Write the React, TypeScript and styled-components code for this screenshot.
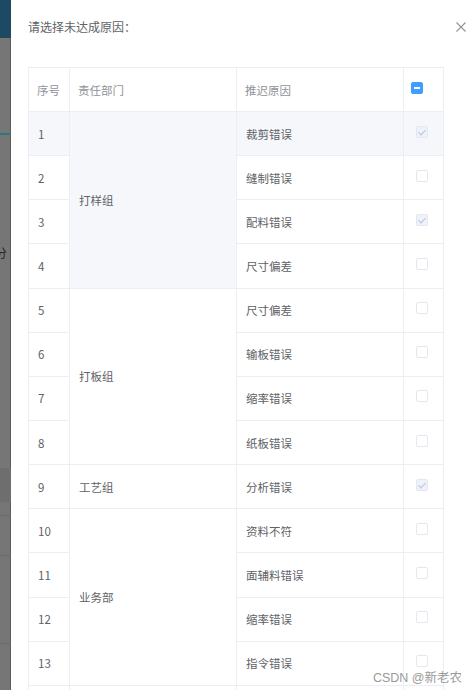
import React from "react";
import styled, { createGlobalStyle } from "styled-components";

type Reason = {
  no?: number;
  dept?: string;
  span?: number;
  reason: string;
  checked: boolean;
};

const reasons: Reason[] = [
  { no: 1, dept: "打样组", span: 4, reason: "裁剪错误", checked: true },
  { no: 2, reason: "缝制错误", checked: false },
  { no: 3, reason: "配料错误", checked: true },
  { no: 4, reason: "尺寸偏差", checked: false },
  { no: 5, dept: "打板组", span: 4, reason: "尺寸偏差", checked: false },
  { no: 6, reason: "输板错误", checked: false },
  { no: 7, reason: "缩率错误", checked: false },
  { no: 8, reason: "纸板错误", checked: false },
  { no: 9, dept: "工艺组", span: 1, reason: "分析错误", checked: true },
  { no: 10, dept: "业务部", span: 4, reason: "资料不符", checked: false },
  { no: 11, reason: "面辅料错误", checked: false },
  { no: 12, reason: "缩率错误", checked: false },
  { no: 13, reason: "指令错误", checked: false },
  // next row, only its top border shows at the bottom of the window
  { dept: "", span: 1, reason: "", checked: false },
];

// the first group is hovered in the screenshot
const hoverRow = 1;
const hoverGroup = "打样组";

function App() {
  return (
    <>
      <GlobalStyle />
      <Page>
        <Backdrop>
          <BackNav />
          <BackRule $top={95} $height={2} $color="#2c7880" />
          <BackText>分</BackText>
          <BackBand />
          <BackRule $top={13} $height={1} $color="#6a6a6a" />
          <BackRule $top={39} $height={1} $color="#6a6a6a" />
          <BackRule $top={87} $height={1} $color="#6a6a6a" />
        </Backdrop>
        <Dialog>
          <DialogHeader>
            <Title>请选择未达成原因：</Title>
            <CloseButton aria-label="close">
              <svg width="10" height="10" viewBox="0 0 10 10">
                <path
                  d="M0.5 0.5 L9.5 9.5 M9.5 0.5 L0.5 9.5"
                  stroke="#909399"
                  strokeWidth="1.1"
                  fill="none"
                />
              </svg>
            </CloseButton>
          </DialogHeader>
          <Table>
            <colgroup>
              <col style={{ width: 41 }} />
              <col style={{ width: 167 }} />
              <col style={{ width: 167 }} />
              <col style={{ width: 40 }} />
            </colgroup>
            <thead>
              <tr>
                <HeadCell>序号</HeadCell>
                <HeadCell>责任部门</HeadCell>
                <HeadCell>推迟原因</HeadCell>
                <HeadCell>
                  <Check $state="indeterminate" $offset={8} />
                </HeadCell>
              </tr>
            </thead>
            <tbody>
              {reasons.map((r, i) => {
                const hover = r.no === hoverRow;
                return (
                  <tr key={i}>
                    <Cell $hover={hover}>{r.no}</Cell>
                    {r.dept !== undefined && (
                      <Cell rowSpan={r.span} $hover={r.dept === hoverGroup}>
                        {r.dept}
                      </Cell>
                    )}
                    <Cell $hover={hover}>{r.reason}</Cell>
                    <Cell $hover={hover}>
                      {r.no !== undefined && (
                        <Check
                          $state={r.checked ? "checked" : "empty"}
                          $offset={12}
                        />
                      )}
                    </Cell>
                  </tr>
                );
              })}
            </tbody>
          </Table>
          <Watermark>CSDN @新老农</Watermark>
        </Dialog>
      </Page>
    </>
  );
}
export default App;

const GlobalStyle = createGlobalStyle`
  html, body {
    margin: 0;
    padding: 0;
    background: #fff;
    overflow: hidden;
  }
  body {
    font-family: "Noto Sans CJK SC", "Noto Sans", "Liberation Sans", sans-serif;
  }
`;

const Page = styled.div`
  display: flex;
  width: 474px;
  height: 690px;
  overflow: hidden;
`;

const Backdrop = styled.div`
  flex: none;
  width: 11px;
  display: flex;
  flex-direction: column;
  background: #767676;
  box-shadow: inset -1px 0 #5c5c5c;
  overflow: hidden;
`;

const BackNav = styled.div`
  height: 38px;
  background: #1d4a62;
`;

const BackRule = styled.div<{ $top: number; $height: number; $color: string }>`
  margin-top: ${(p) => p.$top}px;
  height: ${(p) => p.$height}px;
  background: ${(p) => p.$color};
`;

const BackText = styled.div`
  margin: 111px 0 0 -5px;
  font-size: 12px;
  line-height: 14px;
  color: #262626;
`;

const BackBand = styled.div`
  margin-top: 208px;
  height: 34px;
  background: #6e6e6e;
`;

const Dialog = styled.div`
  position: relative;
  flex: 1;
  background: #fff;
  padding-left: 17px;
`;

const DialogHeader = styled.div`
  display: flex;
  align-items: center;
  justify-content: space-between;
  height: 53px;
  padding-right: 8px;
`;

const Title = styled.span`
  font-size: 12px;
  color: #606266;
`;

const CloseButton = styled.button`
  display: flex;
  padding: 0;
  border: none;
  background: none;
  cursor: pointer;
`;

const Table = styled.table`
  margin-top: 14px;
  width: 415px;
  table-layout: fixed;
  border-collapse: separate;
  border-spacing: 0;
  border-top: 1px solid #ebeef5;
  border-left: 1px solid #ebeef5;
  font-size: 11.5px;
`;

const HeadCell = styled.th`
  height: 43px;
  padding: 0 0 0 8px;
  text-align: left;
  font-weight: normal;
  color: #909399;
  border-right: 1px solid #ebeef5;
  border-bottom: 1px solid #ebeef5;
`;

const Cell = styled.td<{ $hover?: boolean }>`
  height: 43.15px;
  padding: 0 0 0 9px;
  color: #606266;
  background: ${(p) => (p.$hover ? "#f5f7fa" : "#fff")};
  border-right: 1px solid #ebeef5;
  border-bottom: 1px solid #ebeef5;
`;

const Check = styled.span<{
  $state: "checked" | "empty" | "indeterminate";
  $offset: number;
}>`
  position: relative;
  display: block;
  box-sizing: border-box;
  width: 12px;
  height: 12px;
  margin: -4px 0 0 ${(p) => p.$offset - 9}px;
  border-radius: 2px;
  border: 1px solid
    ${(p) => (p.$state === "indeterminate" ? "#409eff" : "#e4e7ed")};
  background: ${(p) =>
    p.$state === "indeterminate"
      ? "#409eff"
      : p.$state === "checked"
      ? "#edf2fc"
      : "#fff"};

  &::after {
    content: "";
    position: absolute;
    display: ${(p) => (p.$state === "empty" ? "none" : "block")};
    ${(p) =>
      p.$state === "indeterminate"
        ? `
      left: 2px;
      top: 4px;
      width: 6px;
      height: 2px;
      background: #fff;
    `
        : `
      left: 3px;
      top: 1px;
      width: 3px;
      height: 6px;
      border: 1px solid #c0c4cc;
      border-left: 0;
      border-top: 0;
      transform: rotate(45deg);
    `}
  }
`;

const Watermark = styled.div`
  position: absolute;
  right: 12px;
  bottom: 4px;
  font-size: 12.5px;
  color: #9a9a9a;
  font-family: "Liberation Sans", "Noto Sans CJK SC", sans-serif;
  pointer-events: none;
`;
